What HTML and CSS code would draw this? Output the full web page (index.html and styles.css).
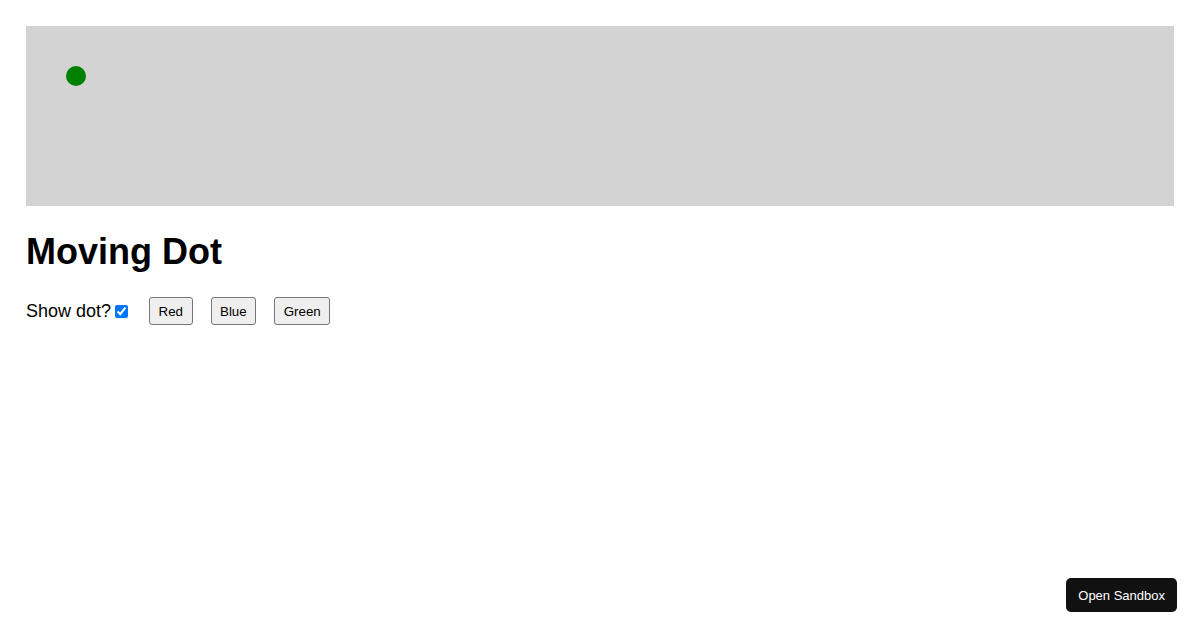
FILE: index.html
```html
<!DOCTYPE html>
<html>
<head>
<meta charset="utf-8">
<link rel="stylesheet" href="styles.css">
</head>
<body>
<div class="app">
  <div class="canvas">
    <div class="dot"></div>
  </div>
  <h1 class="title">Moving Dot</h1>
  <div class="controls">
    <label class="toggle">Show dot? <input type="checkbox" checked></label>
    <button class="btn">Red</button>
    <button class="btn">Blue</button>
    <button class="btn">Green</button>
  </div>
</div>
<button class="sandbox">Open Sandbox</button>
</body>
</html>
```
FILE: styles.css
```css
html, body {
  margin: 0;
  padding: 0;
  background: #fff;
  font-family: "Liberation Sans", Arial, sans-serif;
}
.app {
  padding: 26px;
}
.canvas {
  position: relative;
  height: 180px;
  background: #d3d3d3;
}
.dot {
  position: absolute;
  left: 40px;
  top: 40px;
  width: 20px;
  height: 20px;
  border-radius: 50%;
  background: green;
}
.title {
  font-size: 36px;
  font-weight: bold;
  margin: 25px 0 0 0;
  line-height: 41px;
}
.controls {
  display: flex;
  align-items: center;
  margin-top: 25px;
  height: 28px;
}
.toggle {
  display: flex;
  align-items: center;
  font-size: 18px;
  line-height: 21px;
}
.toggle input {
  width: 13px;
  height: 13px;
  margin: 0 3px 0 4px;
}
.btn {
  margin-left: 18px;
  height: 28px;
  padding: 0 8.5px;
  font-family: "Liberation Sans", Arial, sans-serif;
  font-size: 13.33px;
  color: #000;
  background: #efefef;
  border: 1px solid #767676;
  border-radius: 3px;
}
.sandbox {
  position: fixed;
  right: 23px;
  bottom: 18px;
  height: 34px;
  padding: 0 12px;
  background: #111;
  color: #fff;
  border: none;
  border-radius: 5px;
  font-family: "Liberation Sans", Arial, sans-serif;
  font-size: 13px;
}
```
